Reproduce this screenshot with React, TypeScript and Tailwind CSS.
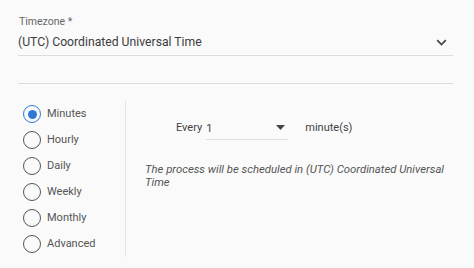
import React from "react";

const options = ["Minutes", "Hourly", "Daily", "Weekly", "Monthly", "Advanced"];

export default function App() {
  return (
    <div className="w-[474px] h-[268px] bg-[#fafafa] overflow-hidden text-[#333]" style={{ fontFamily: "Roboto, 'Liberation Sans', sans-serif" }}>
      <div className="pl-[18px] pr-[21px] pt-[15px]">
        <div className="text-[10.5px] leading-[14px] text-[#666] pl-[1px]">Timezone *</div>
        <div className="flex items-center justify-between h-[27px] border-b border-[#dcdcdc]">
          <span className="text-[12.2px] leading-[16px] text-[#3c3c3c]">(UTC) Coordinated Universal Time</span>
          <svg width="11" height="7" viewBox="0 0 11 7" className="mr-[6px] mt-[1px]">
            <path d="M1.2 1.2 L5.5 5.5 L9.8 1.2" fill="none" stroke="#444" strokeWidth="1.7" />
          </svg>
        </div>
        <div className="h-[28px] border-b border-[#dcdcdc]" />
      </div>
      <div className="flex pl-[23px] pt-[17px]">
        <div className="flex flex-col w-[103px] border-r border-[#e4e4e4]">
          {options.map((o, i) => (
            <div key={o} className="flex items-center h-[26px]">
              <div className={`w-[18px] h-[18px] rounded-full border-[1.5px] flex items-center justify-center ${i === 0 ? "border-[#2f7bd3]" : "border-[#555]"}`}>
                {i === 0 && <div className="w-[9px] h-[9px] rounded-full bg-[#2f7bd3]" />}
              </div>
              <span className="ml-[6px] text-[11px] text-[#555]">{o}</span>
            </div>
          ))}
        </div>
        <div className="pl-[19px] pt-[14px]">
          <div className="flex items-center h-[26px] pl-[31px]">
            <span className="text-[11px] text-[#444]">Every</span>
            <div className="ml-[4px] w-[82px] h-[24px] border-b border-[#dedede] flex items-center justify-between">
              <span className="text-[11px] text-[#444] pt-[3px]">1</span>
              <svg width="9" height="5" viewBox="0 0 9 5" className="mr-[3px]">
                <path d="M0 0 L9 0 L4.5 5 Z" fill="#444" />
              </svg>
            </div>
            <span className="ml-[17px] text-[11px] text-[#444]">minute(s)</span>
          </div>
          <div className="mt-[22px] text-[11.3px] leading-[13px] italic text-[#555] w-[310px]">
            The process will be scheduled in (UTC) Coordinated Universal Time
          </div>
        </div>
      </div>
    </div>
  );
}
